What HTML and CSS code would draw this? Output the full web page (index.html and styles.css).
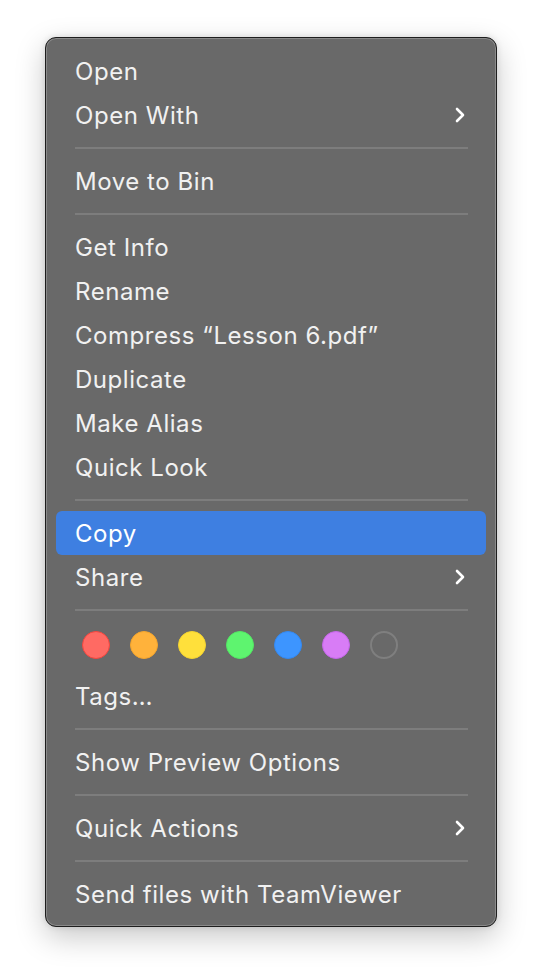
FILE: index.html
```html
<!DOCTYPE html>
<html>
<head>
<meta charset="utf-8">
<link rel="stylesheet" href="styles.css">
</head>
<body>
<div class="page">
  <div class="menu">
    <div class="item">Open</div>
    <div class="item">Open With<svg class="chev" viewBox="0 0 12 16"><path d="M3 2 L9 8 L3 14"/></svg></div>
    <div class="sep"></div>
    <div class="item">Move to Bin</div>
    <div class="sep"></div>
    <div class="item">Get Info</div>
    <div class="item">Rename</div>
    <div class="item">Compress “Lesson 6.pdf”</div>
    <div class="item">Duplicate</div>
    <div class="item">Make Alias</div>
    <div class="item">Quick Look</div>
    <div class="sep"></div>
    <div class="item active">Copy</div>
    <div class="item">Share<svg class="chev" viewBox="0 0 12 16"><path d="M3 2 L9 8 L3 14"/></svg></div>
    <div class="sep"></div>
    <div class="tags">
      <span class="dot red"></span>
      <span class="dot orange"></span>
      <span class="dot yellow"></span>
      <span class="dot green"></span>
      <span class="dot blue"></span>
      <span class="dot purple"></span>
      <span class="dot none"></span>
    </div>
    <div class="item">Tags…</div>
    <div class="sep"></div>
    <div class="item">Show Preview Options</div>
    <div class="sep"></div>
    <div class="item">Quick Actions<svg class="chev" viewBox="0 0 12 16"><path d="M3 2 L9 8 L3 14"/></svg></div>
    <div class="sep"></div>
    <div class="item">Send files with TeamViewer</div>
  </div>
</div>
</body>
</html>
```

FILE: styles.css
```css
html, body {
  margin: 0;
  padding: 0;
  background: #ffffff;
}
.page {
  padding: 37px 0 53px 45px;
}
.menu {
  box-sizing: border-box;
  width: 452px;
  height: 890px;
  background: #696969;
  border: 1px solid #1e1e1e;
  border-radius: 11px;
  box-shadow: inset 0 0 0 1px #8a8a8a, 0 10px 30px rgba(0,0,0,0.22), 0 0 6px rgba(0,0,0,0.12);
  padding: 11px 10px 10px 10px;
  font-family: Inter, "Noto Sans", sans-serif;
  font-size: 24px;
  letter-spacing: 0.55px;
  color: #f1f1f1;
}
.item {
  height: 44px;
  display: flex;
  align-items: center;
  justify-content: space-between;
  padding: 0 20px 0 19px;
  box-sizing: border-box;
  border-radius: 6px;
}
.item.active {
  background: #3e7fe1;
  color: #ffffff;
}
.chev {
  width: 12px;
  height: 16px;
  fill: none;
  stroke: #ffffff;
  stroke-width: 2.6;
  stroke-linecap: round;
  stroke-linejoin: round;
}
.sep {
  height: 22px;
  display: flex;
  align-items: center;
  padding: 0 18px 0 19px;
}
.sep::before {
  content: "";
  flex: 1;
  height: 2px;
  background: #7d7d7d;
}
.tags {
  height: 53px;
  display: flex;
  align-items: center;
  gap: 20px;
  padding: 0 0 5px 26px;
  box-sizing: border-box;
}
.dot {
  width: 28px;
  height: 28px;
  border-radius: 50%;
  box-sizing: border-box;
}
.red { background: #ff6a63; border: 1.5px solid #f4453e; }
.orange { background: #ffb23b; border: 1px solid #f5a52c; }
.yellow { background: #ffe03b; border: 1px solid #f5d42f; }
.green { background: #5ef46f; border: 1px solid #52e863; }
.blue { background: #3d95ff; border: 1px solid #3389f2; }
.purple { background: #d87cf6; border: 1.5px solid #c566ea; }
.none { border: 2px solid #7f7f7f; }
```
